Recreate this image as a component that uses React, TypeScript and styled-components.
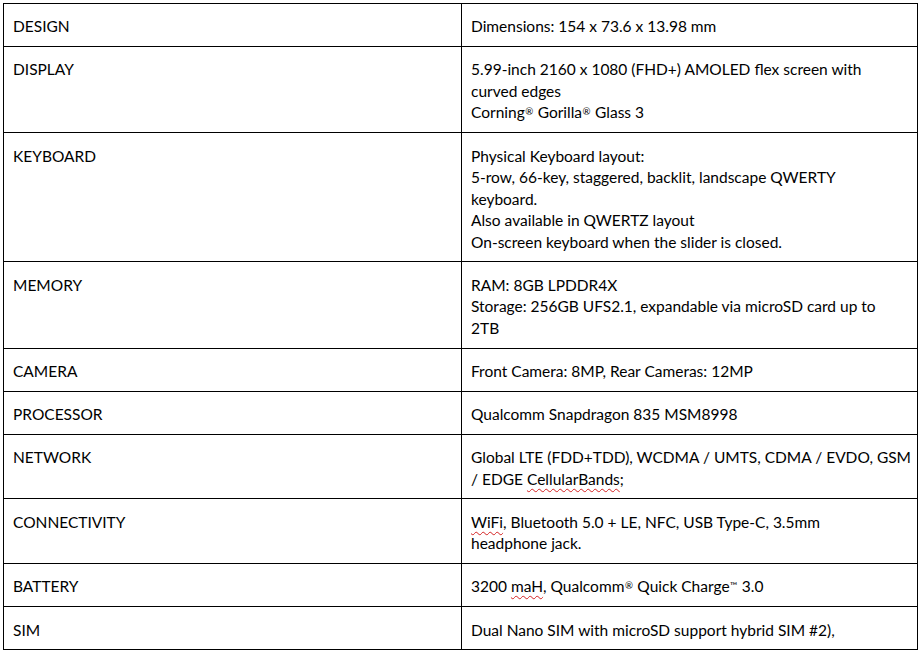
import React from "react";
import styled, { createGlobalStyle } from "styled-components";

const GlobalStyle = createGlobalStyle`
  html, body {
    margin: 0;
    padding: 0;
    background: #ffffff;
  }
  body {
    font-family: Lato, "Open Sans", "Liberation Sans", sans-serif;
    color: #000000;
  }
`;

const Page = styled.div`
  padding: 3px 0 0 3px;
`;

const SpecTable = styled.table`
  width: 914px;
  border-collapse: collapse;
  table-layout: fixed;
  font-size: 15.5px;
  line-height: 21.5px;
`;

const LabelCol = styled.col`
  width: 458px;
`;

const ValueCol = styled.col`
  width: 456px;
`;

const Cell = styled.td`
  border: 1px solid #000000;
  vertical-align: top;
  padding: 12.25px 4px 8.4px 9px;
`;

const Label = styled(Cell)`
  text-transform: uppercase;
`;

const Line = styled.span`
  display: block;
  height: 21.5px;
  white-space: nowrap;
`;

const Reg = styled.span`
  font-size: 0.62em;
  position: relative;
  top: -0.35em;
  margin: 0 0.5px;
`;

const Misspelled = styled.span`
  text-decoration-line: underline;
  text-decoration-style: wavy;
  text-decoration-color: #d42020;
  text-decoration-thickness: 1px;
  text-underline-offset: 3px;
`;

type Spec = { label: string; lines: React.ReactNode[] };

const specs: Spec[] = [
  { label: "DESIGN", lines: ["Dimensions: 154 x 73.6 x 13.98 mm"] },
  {
    label: "DISPLAY",
    lines: [
      "5.99-inch 2160 x 1080 (FHD+) AMOLED flex screen with",
      "curved edges",
      <>
        Corning<Reg>®</Reg> Gorilla<Reg>®</Reg> Glass 3
      </>,
    ],
  },
  {
    label: "KEYBOARD",
    lines: [
      "Physical Keyboard layout:",
      "5-row, 66-key, staggered, backlit, landscape QWERTY",
      "keyboard.",
      "Also available in QWERTZ layout",
      "On-screen keyboard when the slider is closed.",
    ],
  },
  {
    label: "MEMORY",
    lines: [
      "RAM: 8GB LPDDR4X",
      "Storage: 256GB UFS2.1, expandable via microSD card up to",
      "2TB",
    ],
  },
  { label: "CAMERA", lines: ["Front Camera: 8MP, Rear Cameras: 12MP"] },
  { label: "PROCESSOR", lines: ["Qualcomm Snapdragon 835 MSM8998"] },
  {
    label: "NETWORK",
    lines: [
      "Global LTE (FDD+TDD), WCDMA / UMTS, CDMA / EVDO, GSM",
      <>
        / EDGE <Misspelled>CellularBands</Misspelled>;
      </>,
    ],
  },
  {
    label: "CONNECTIVITY",
    lines: [
      <>
        <Misspelled>WiFi</Misspelled>, Bluetooth 5.0 + LE, NFC, USB Type-C, 3.5mm
      </>,
      "headphone jack.",
    ],
  },
  {
    label: "BATTERY",
    lines: [
      <>
        3200 <Misspelled>maH</Misspelled>, Qualcomm<Reg>®</Reg> Quick Charge<Reg>™</Reg> 3.0
      </>,
    ],
  },
  { label: "SIM", lines: ["Dual Nano SIM with microSD support hybrid SIM #2),"] },
];

export default function App() {
  return (
    <>
      <GlobalStyle />
      <Page>
        <SpecTable>
          <colgroup>
            <LabelCol />
            <ValueCol />
          </colgroup>
          <tbody>
            {specs.map((s) => (
              <tr key={s.label}>
                <Label>{s.label}</Label>
                <Cell>
                  {s.lines.map((l, i) => (
                    <Line key={i}>{l}</Line>
                  ))}
                </Cell>
              </tr>
            ))}
          </tbody>
        </SpecTable>
      </Page>
    </>
  );
}
